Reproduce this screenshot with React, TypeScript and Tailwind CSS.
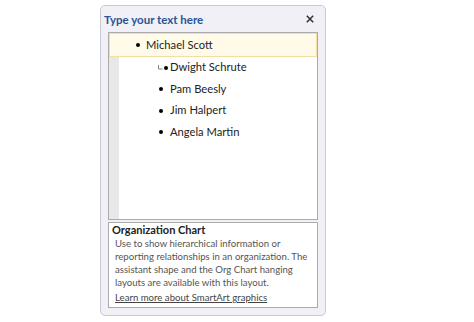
export default function App() {
  const items = [
    { name: 'Michael Scott', level: 0 },
    { name: 'Dwight Schrute', level: 1, assistant: true },
    { name: 'Pam Beesly', level: 1 },
    { name: 'Jim Halpert', level: 1 },
    { name: 'Angela Martin', level: 1 },
  ]

  return (
    <div className="w-[474px] h-[322px] bg-white pl-[100px] pt-[5px] font-['Lato',sans-serif]">
      <div className="w-[226px] h-[311px] rounded-[5px] border border-[#c9c9d3] bg-[#f0f0f6] flex flex-col px-[7px] pb-[7px]">
        {/* Header */}
        <div className="shrink-0 h-[26px] flex items-center justify-between">
          <span className="-ml-[4px] mt-[1px] text-[11.5px] font-bold text-[#2a5592]">Type your text here</span>
          <svg className="w-[8px] h-[8px] mr-[4px]" viewBox="0 0 10 10" fill="none" stroke="#333" strokeWidth={1.9}>
            <path d="M1 1l8 8M9 1l-8 8" />
          </svg>
        </div>

        {/* Text pane */}
        <div className="shrink-0 h-[188px] border border-[#ababab] bg-white flex">
          <div className="flex-1 flex flex-col relative">
            <div className="absolute left-0 top-0 bottom-0 w-[10px] bg-[#e8e8ea]" />
            {items.map((item, i) => (
              <div
                key={item.name}
                className={`relative flex items-center text-[11.2px] text-[#222] ${
                  i === 0 ? 'h-[24px] bg-[#fffbe8] border border-[#f3dfa4]' : 'h-[21.5px]'
                }`}
              >
                {item.level === 0 ? (
                  <div className="flex items-center pl-[26px]">
                    <span className="w-[4px] h-[4px] rounded-full bg-black mr-[6px]" />
                    {item.name}
                  </div>
                ) : (
                  <div className="flex items-center pl-[49px]">
                    {item.assistant ? (
                      <span className="flex items-center w-[12px]">
                        <svg className="w-[6px] h-[6px]" viewBox="0 0 6 6" fill="none" stroke="#777" strokeWidth={0.9}>
                          <path d="M0.5 0v4h4" />
                        </svg>
                        <span className="w-[4px] h-[4px] rounded-full bg-black" />
                      </span>
                    ) : (
                      <span className="w-[4px] h-[4px] rounded-full bg-black mr-[7px] ml-[1px]" />
                    )}
                    <span>{item.name}</span>
                  </div>
                )}
              </div>
            ))}
          </div>
        </div>

        {/* Description pane */}
        <div className="mt-[2px] flex-1 min-h-0 overflow-hidden border border-[#ababab] bg-white px-[3px] text-[9.6px] leading-[13px] text-[#555]">
          <div className="font-bold text-[11px] text-[#222] mb-[1px]">Organization Chart</div>
          <p className="pl-[3px]">
            Use to show hierarchical information or reporting relationships in an organization. The assistant shape and the Org Chart hanging layouts are available with this layout.
          </p>
          <a className="block pl-[3px] mt-[2px] underline text-[#444]">Learn more about SmartArt graphics</a>
        </div>
      </div>
    </div>
  )
}
